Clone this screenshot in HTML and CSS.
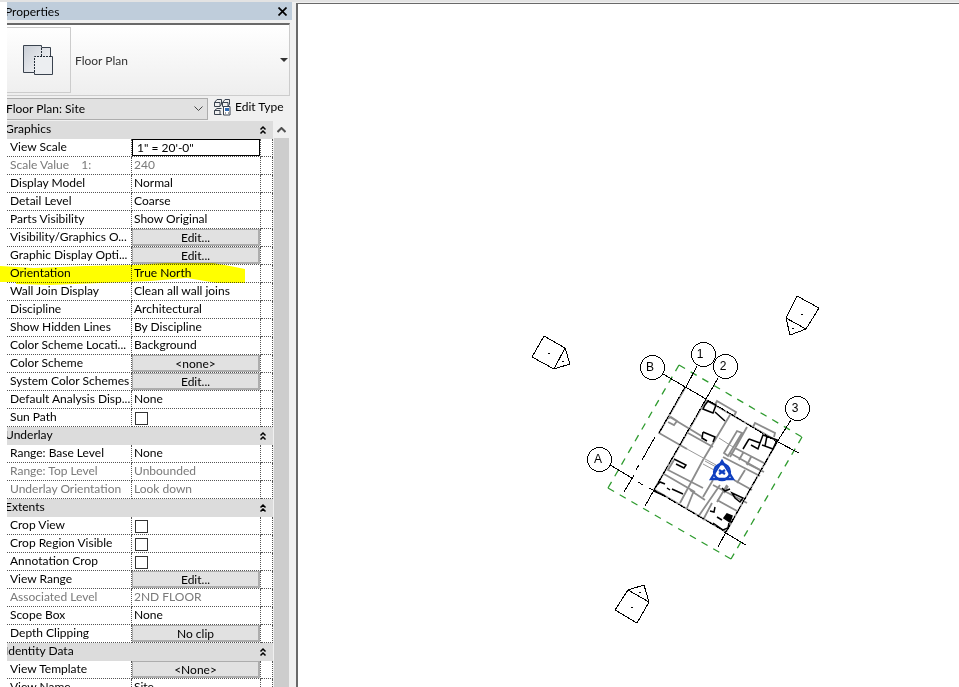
FILE: index.html
```html
<!DOCTYPE html>
<html lang="en">
<head>
    <meta charset="utf-8">
    <title>Floor Plan: Site</title>
    <link rel="stylesheet" href="styles.css">
</head>
<body>
    <!-- Properties palette -->
    <aside class="palette">
        <div class="title-bar">
            <h1>Properties</h1>
            <button type="button" class="close" aria-label="Close">
                <svg width="9" height="9" viewBox="0 0 9 9"><path d="M.5 .5L8.500 8.500M8.500 .5L.5 8.500" fill="none" stroke="#000" stroke-width="1.700"/></svg>
            </button>
        </div>

        <div class="type-selector">
            <div class="preview">
                <svg width="32" height="32" viewBox="0 0 32 32">
                    <defs>
                        <linearGradient id="sheet" x1="0" y1="0" x2="1" y2="1">
                            <stop offset="0" stop-color="#c9ced6"/>
                            <stop offset="1" stop-color="#fbfbfc"/>
                        </linearGradient>
                    </defs>
                    <path d="M1.500 1.500H19.500V3.500H28.500V30.500H12.500V28.500H1.500Z" fill="url(#sheet)"/>
                    <path d="M12.500 28.500H1.500V1.500H19.500V3.500H28.500V12.500H30.500V30.500H12.500V28.500" fill="none" stroke="#3a434f"/>
                    <path d="M13 13H30V30H13Z" fill="#eceef1"/>
                    <path d="M12.500 28V12.500H30M19.500 4V12" fill="none" stroke="#222b36" stroke-dasharray="2 1"/>
                </svg>
            </div>
            <select aria-label="Type"><option>Floor Plan</option></select>
            <svg class="arrow" width="8" height="4" viewBox="0 0 8 4"><path d="M0 0H8L4 4Z" fill="#333"/></svg>
        </div>

        <div class="filter">
            <div class="combo">
                <select aria-label="Filter"><option>Floor Plan: Site</option></select>
                <svg class="arrow" width="9" height="6" viewBox="0 0 9 6"><path d="M.5 .5L4.500 4.500L8.500 .5" fill="none" stroke="#444"/></svg>
            </div>
            <button type="button" class="edit-type">
                <svg width="17" height="17" viewBox="0 0 17 17" fill="none" stroke="#3a434f">
                    <path d="M.5 3.500L3 .5H7.500V5L6 7.500H.5ZM.5 3.500H6V7M8.500 3.500L11 .5H15.500V5L14 7.500H8.500ZM8.500 3.500H14V7M7.500 9.500H3L.5 11.500V15.500H7.500M.5 11.500H6V15"/>
                    <path d="M9.500 7.500H16V16H9.500Z" fill="#fff"/>
                    <path d="M11 9H15V12H11Z" fill="#2d6ab5" stroke="none"/>
                    <path d="M11 14H12M14 14H15"/>
                </svg>
                Edit Type
            </button>
        </div>

        <div class="grid">
            <table>
                <colgroup>
                    <col class="col-name">
                    <col class="col-value">
                    <col class="col-link">
                </colgroup>
                <tbody>
                    <tr class="group"><th colspan="2">Graphics</th><th><svg class="fold" viewBox="0 0 6 8"><path d="M.5 3.500L3 1L5.500 3.500M.5 7.500L3 5L5.500 7.500"/></svg></th></tr>
                    <tr><td><label for="scale">View Scale</label></td><td><input type="text" id="scale" class="active" value="1&quot; = 20'-0&quot;"></td><td></td></tr>
                    <tr class="off"><td>Scale Value &nbsp;&nbsp; 1:</td><td>240</td><td></td></tr>
                    <tr><td>Display Model</td><td>Normal</td><td></td></tr>
                    <tr><td>Detail Level</td><td>Coarse</td><td></td></tr>
                    <tr><td>Parts Visibility</td><td>Show Original</td><td></td></tr>
                    <tr><td>Visibility/Graphics O...</td><td><button type="button">Edit...</button></td><td></td></tr>
                    <tr><td>Graphic Display Opti...</td><td><button type="button">Edit...</button></td><td></td></tr>
                    <tr>
                        <td class="marked">Orientation
                            <svg class="marker" width="246" height="24" viewBox="0 0 246 24"><path d="M0 4L34 6L86 4L133 3L165 1L213 1L230 4L245 7V21H217L187 16L150 19L100 21L50 23L16 22V20H0Z" fill="#ff0"/></svg>
                        </td>
                        <td>True North</td><td></td>
                    </tr>
                    <tr><td>Wall Join Display</td><td>Clean all wall joins</td><td></td></tr>
                    <tr><td>Discipline</td><td>Architectural</td><td></td></tr>
                    <tr><td>Show Hidden Lines</td><td>By Discipline</td><td></td></tr>
                    <tr><td>Color Scheme Locati...</td><td>Background</td><td></td></tr>
                    <tr><td>Color Scheme</td><td><button type="button">&lt;none&gt;</button></td><td></td></tr>
                    <tr><td>System Color Schemes</td><td><button type="button">Edit...</button></td><td></td></tr>
                    <tr><td>Default Analysis Disp...</td><td>None</td><td></td></tr>
                    <tr><td><label for="sun">Sun Path</label></td><td><input type="checkbox" id="sun"></td><td></td></tr>
                </tbody>
                <tbody>
                    <tr class="group"><th colspan="2">Underlay</th><th><svg class="fold" viewBox="0 0 6 8"><path d="M.5 3.500L3 1L5.500 3.500M.5 7.500L3 5L5.500 7.500"/></svg></th></tr>
                    <tr><td>Range: Base Level</td><td>None</td><td></td></tr>
                    <tr class="off"><td>Range: Top Level</td><td>Unbounded</td><td></td></tr>
                    <tr class="off"><td>Underlay Orientation</td><td>Look down</td><td></td></tr>
                </tbody>
                <tbody>
                    <tr class="group"><th colspan="2">Extents</th><th><svg class="fold" viewBox="0 0 6 8"><path d="M.5 3.500L3 1L5.500 3.500M.5 7.500L3 5L5.500 7.500"/></svg></th></tr>
                    <tr><td><label for="crop">Crop View</label></td><td><input type="checkbox" id="crop"></td><td></td></tr>
                    <tr><td><label for="region">Crop Region Visible</label></td><td><input type="checkbox" id="region"></td><td></td></tr>
                    <tr><td><label for="annotation">Annotation Crop</label></td><td><input type="checkbox" id="annotation"></td><td></td></tr>
                    <tr><td>View Range</td><td><button type="button">Edit...</button></td><td></td></tr>
                    <tr class="off"><td>Associated Level</td><td>2ND FLOOR</td><td></td></tr>
                    <tr><td>Scope Box</td><td>None</td><td></td></tr>
                    <tr><td>Depth Clipping</td><td><button type="button">No clip</button></td><td></td></tr>
                </tbody>
                <tbody>
                    <tr class="group"><th colspan="2">Identity Data</th><th><svg class="fold" viewBox="0 0 6 8"><path d="M.5 3.500L3 1L5.500 3.500M.5 7.500L3 5L5.500 7.500"/></svg></th></tr>
                    <tr><td>View Template</td><td><button type="button">&lt;None&gt;</button></td><td></td></tr>
                    <tr><td>View Name</td><td>Site</td><td></td></tr>
                </tbody>
            </table>
            <div class="scrollbar">
                <svg width="9" height="6" viewBox="0 0 9 6"><path d="M.5 5L4.500 1L8.500 5" fill="none" stroke="#505050" stroke-width="2"/></svg>
                <div class="thumb"></div>
            </div>
        </div>
    </aside>

    <!-- Drawing area -->
    <main class="canvas">
        <svg viewBox="298 4 661 683" role="img" aria-label="Site plan">
            <!-- crop region -->
            <path class="crop" d="M679 365L802 437M802 437L731 559M608 488L731 559M679 365L608 488"/>

            <!-- elevation markers -->
            <g class="line">
                <path d="M544 336L565 348L554 369L532 357ZM565 348L570 364L554 369M548 353H550M562 361H564"/>
                <path d="M797 296L819 308L806 329L786 318ZM786 318L790 335L806 329M801 314H803M792 328H794"/>
                <path d="M628 590L649 602L637 623L615 610ZM628 590L644 585L649 602M631 607H633M639 592H641"/>
            </g>

            <!-- inner walls -->
            <g class="wall">
                <path d="M685 388L659 433L687 449M670 417L703 437M688 433L713 447M667 419L671 417L677 421L674 425L668 422"/>
                <path d="M706 400L654 490M730 415L703 460L680 503M715 405L717 401L736 412L734 416M753 427L755 423L775 433L774 437"/>
                <path d="M737 431L742 433L728 456L724 453ZM747 427L733 452M735 448L766 464M730 453L762 471M743 453L739 460M751 457L747 465M734 450L730 457"/>
                <path d="M723 457L760 476M746 463L764 472M745 470L737 483M734 480L752 490M713 485L747 503M720 485L698 517M713 480L703 497M717 502L727 485M717 500L737 511"/>
                <path d="M693 493L687 508M690 490L705 500M674 460L668 470L703 488M712 503L703 520M728 486L724 493M664 474L695 492"/>
                <path d="M706 400L777 441M777 442L726 532M655 490L726 532"/>
            </g>
            <path class="thin" d="M687 449L716 465M719 438L733 447M705 461L718 468M703 464L716 471"/>

            <!-- fixtures -->
            <g class="fixture">
                <path d="M705 405L708 401L716 405L713 413L703 409ZM715 412L725 421M703 432L715 437L713 442M703 432L702 438L707 441"/>
                <path d="M749 439L760 443L758 449L751 445M760 443L763 435L777 440L773 449L762 445M767 436L765 446M749 439L743 449"/>
                <path d="M674 459L686 465L684 468L676 464M657 485L660 482L665 484M654 491L665 496M667 488L670 490M672 489L683 494"/>
                <path d="M722 488L725 491L730 489M732 493L743 498L740 502L735 498ZM715 507L714 512L710 511M717 517L722 520M713 523L723 530L728 528L729 523"/>
                <path d="M724 518L727 514L732 516L730 522Z" fill="#000"/>
            </g>

            <!-- grid lines -->
            <g class="line">
                <path d="M663 374L706 399M776 441L799 453M610 465L632 478M638 482L643 485M649 488L660 494M724 532L746 545"/>
                <path d="M697 366L686 387M655 437L642 460M639 465L636 470M634 475L624 492M718 378L706 399M654 490L645 506M791 420L777 442M726 532L718 547"/>
            </g>
            <path class="outline" d="M685 387L659 433M706 399L654 490L726 532L777 442L706 399"/>

            <!-- grid bubbles -->
            <g class="bubble">
                <circle cx="652.5" cy="367.5" r="12"/><text x="650" y="371">B</text>
                <circle cx="703.5" cy="354.5" r="12"/><text x="700" y="358">1</text>
                <circle cx="725.5" cy="366.5" r="12"/><text x="723" y="370">2</text>
                <circle cx="797.5" cy="408.5" r="12"/><text x="795" y="412">3</text>
                <circle cx="599.5" cy="459.5" r="12"/><text x="598" y="463">A</text>
            </g>

            <!-- survey point -->
            <g class="survey">
                <path d="M722 461L711 479H733Z"/>
                <circle cx="722" cy="472" r="8"/>
                <path d="M719 470L725 474M725 470L719 474"/>
            </g>
        </svg>
    </main>
</body>
</html>
```
FILE: styles.css
```css
* {
    box-sizing: border-box;
}
body {
    display: flex;
    height: 100vh;
    margin: 0;
    overflow: hidden;
    border-top: 2px solid #e3e3e3;
    background: #f0f0f0;
    font: 12px/16px Lato, "Open Sans", sans-serif;
    color: #000;
}
button, select, input {
    font: inherit;
    color: inherit;
    margin: 0;
    padding: 0;
    border: 0;
    border-radius: 0;
    background: none;
    appearance: none;
}

/* Properties palette */
.palette {
    position: relative;
    display: flex;
    flex-direction: column;
    flex: none;
    width: 296px;
    padding: 0 4px 0 7px;
    overflow: hidden;
    background: linear-gradient(to right, #fff 7px, #f0f0f0 7px);
}
.title-bar {
    display: flex;
    flex: none;
    align-items: center;
    justify-content: space-between;
    height: 18px;
    padding: 1px 5px 0 0;
    overflow: hidden;
    background: #bfcddb;
}
.title-bar h1 {
    margin: 0 0 0 -2px;
    font-size: 12px;
    font-weight: normal;
}
.close {
    display: flex;
}
.type-selector {
    display: flex;
    flex: none;
    align-items: center;
    height: 73px;
    margin: 3px 2px 0 0;
    border: solid #ccc;
    border-width: 2px 1px 1px 0;
    border-top-color: #696969;
    background: linear-gradient(#fff, #eee);
}
.preview {
    display: flex;
    align-items: center;
    width: 64px;
    height: 66px;
    padding-left: 15px;
    border: 1px solid #ccc;
    border-left: 0;
}
.type-selector select {
    flex: 1;
    padding: 2px 0 0 4px;
    color: #333;
}
.arrow {
    margin-right: 1px;
    pointer-events: none;
}
.filter {
    display: flex;
    flex: none;
    align-items: center;
    height: 26px;
}
.combo {
    display: flex;
    align-items: center;
    width: 201px;
    height: 22px;
    padding-right: 3px;
    border: 1px solid #adadad;
    border-left: 0;
    background: #e1e1e1;
}
.combo select {
    flex: 1;
    text-indent: -1px;
}
.edit-type {
    display: flex;
    gap: 4px;
    margin: 0 0 4px 6px;
    white-space: nowrap;
}

/* Parameter grid */
.grid {
    display: flex;
    flex: 1;
    align-items: flex-start;
    gap: 1px;
    min-height: 0;
    margin-top: -1px;
    padding-right: 3px;
}
table {
    flex: none;
    width: 266px;
    table-layout: fixed;
    border-collapse: separate;
    border-spacing: 0;
    background: #fff;
}
.col-name {
    width: 125px;
}
.col-value {
    width: 129px;
}
.col-link {
    width: 12px;
}
th, td {
    height: 18px;
    padding: 0;
    line-height: 15px;
    text-align: left;
    vertical-align: top;
    white-space: nowrap;
}
th {
    overflow: hidden;
    background: #dcdcdc;
    font-weight: normal;
    line-height: 16px;
    text-indent: -2px;
}
td {
    border: dotted #555;
    border-width: 0 1px 1px 0;
}
td:first-child {
    padding-left: 3px;
}
td:nth-child(2) {
    padding-left: 2px;
}
td:nth-child(2):has(button, .active) {
    padding-left: 0;
}
.off {
    color: #7a7a7a;
}
.fold {
    display: block;
    width: 6px;
    height: 8px;
    margin-left: -1px;
    fill: none;
    stroke: #000;
    stroke-width: 1.5;
    overflow: visible;
}
th:last-child {
    overflow: visible;
    vertical-align: middle;
}
td button, .active {
    display: block;
    width: 100%;
    height: 17px;
}
td button {
    border: solid #adadad;
    border-width: 1px 2px 2px 1px;
    background: #e1e1e1;
    line-height: 15px;
    text-align: center;
}
.active {
    padding-left: 4px;
    border: 1px solid #000;
    line-height: 14px;
}
td input[type=checkbox] {
    display: block;
    width: 13px;
    height: 13px;
    margin: 3px 0 0 1px;
    border: 1px solid #333;
    background: #fff;
}
.marked {
    position: relative;
}
.marker {
    position: absolute;
    top: -3px;
    left: -7px;
    mix-blend-mode: multiply;
    pointer-events: none;
}
.scrollbar {
    display: flex;
    flex-direction: column;
    align-self: stretch;
    align-items: center;
    width: 15px;
    padding-top: 6px;
}
.thumb {
    flex: 1;
    width: 100%;
    margin-top: 5px;
    background: #cdcdcd;
}

/* Drawing area */
.canvas {
    flex: 1;
    min-width: 0;
    margin-top: 1px;
    border-top: 1px solid #696969;
    border-left: 2px solid #696969;
    background: #fff;
}
.canvas svg {
    display: block;
    width: 100%;
    height: 100%;
    fill: none;
}
.crop {
    stroke: #2e9b2e;
    stroke-width: 1.3;
    stroke-dasharray: 7 6.5;
}
.line, .bubble circle, .outline {
    stroke: #000;
    shape-rendering: crispEdges;
}
.wall {
    stroke: #8c8c8c;
    stroke-width: 1.8;
}
.thin {
    stroke: #999;
}
.fixture {
    stroke: #000;
    stroke-width: 1.5;
}
.outline {
    stroke-dasharray: 9 2;
}
.bubble circle {
    fill: #fff;
}
.bubble text {
    fill: #000;
    font: 12px "Liberation Sans", sans-serif;
    text-anchor: middle;
}
.survey {
    stroke: #0f3fc0;
    stroke-width: 2.3;
}
```
